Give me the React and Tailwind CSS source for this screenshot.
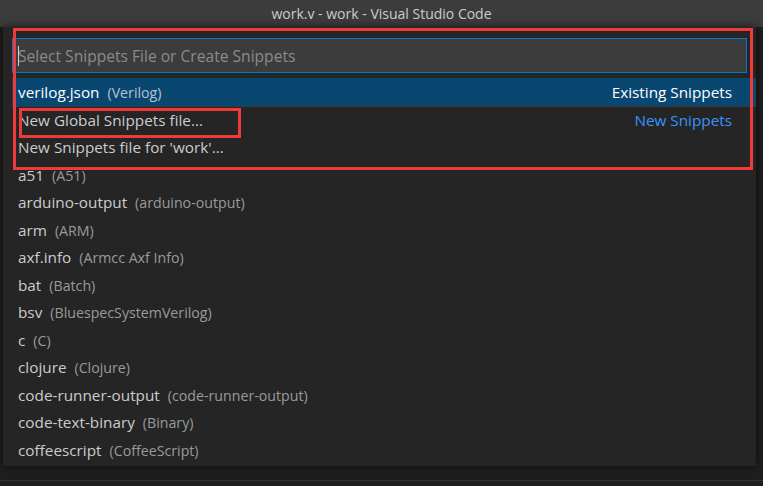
export default function App() {
  const rows = [
    { label: "a51", desc: "(A51)" },
    { label: "arduino-output", desc: "(arduino-output)" },
    { label: "arm", desc: "(ARM)" },
    { label: "axf.info", desc: "(Armcc Axf Info)" },
    { label: "bat", desc: "(Batch)" },
    { label: "bsv", desc: "(BluespecSystemVerilog)" },
    { label: "c", desc: "(C)" },
    { label: "clojure", desc: "(Clojure)" },
    { label: "code-runner-output", desc: "(code-runner-output)" },
    { label: "code-text-binary", desc: "(Binary)" },
    { label: "coffeescript", desc: "(CoffeeScript)" },
  ];

  return (
    <div className="relative w-[763px] h-[486px] overflow-hidden bg-[#1e1e1e] font-['Open_Sans',sans-serif] text-[15.3px] text-[#cccccc]">
      {/* Title bar */}
      <div className="h-[27px] bg-[#3c3c3c] flex items-center justify-center text-[14px] text-[#cccccc]">
        work.v - work - Visual Studio Code
      </div>

      {/* Quick pick panel */}
      <div className="flex">
        <div className="ml-[3px] w-[753px] h-[439px] bg-[#252526] flex flex-col pt-[11px] shadow-[0_0_8px_rgba(0,0,0,0.6)]">
          <div className="mx-[9px] h-[35px] border border-[#007acc] bg-[#3c3c3c] flex items-center pl-[5px] pt-[2px] relative">
            <span className="absolute left-[5px] top-[7px] h-[20px] w-px bg-[#d4d4d4]" />
            <span className="text-[15.6px] text-[#8b8b8b]">Select Snippets File or Create Snippets</span>
          </div>

          <div className="mt-[5px] ml-[9px] flex flex-col">
            <div className="h-[27.5px] bg-[#094771] flex items-center pl-[6px] pr-[24px] pt-[2px]">
              <span className="text-white">verilog.json</span>
              <span className="ml-[8px] text-[14.2px] text-[#b4c3d0]">(Verilog)</span>
              <span className="ml-auto text-white">Existing Snippets</span>
            </div>
            <div className="h-[27.5px] border-t border-[#3a3a3a] flex items-center pl-[6px] pr-[24px] pt-[1px]">
              <span>New Global Snippets file...</span>
              <span className="ml-auto text-[#3794ff]">New Snippets</span>
            </div>
            <div className="h-[27.5px] flex items-center pl-[6px] pt-[2px]">
              <span>New Snippets file for 'work'...</span>
            </div>
            {rows.map((r) => (
              <div key={r.label} className="h-[27.5px] flex items-center pl-[6px] pt-[2px]">
                <span>{r.label}</span>
                <span className="ml-[8px] text-[14.2px] text-[#9a9a9a]">{r.desc}</span>
              </div>
            ))}
          </div>
        </div>
      </div>

      {/* Status strip */}
      <div className="mt-[14px] h-px bg-[#333333]" />

      {/* Annotation boxes */}
      <div className="absolute left-[13px] top-[28px] w-[740px] h-[142px] border-[3px] border-[#ee3a3a]" />
      <div className="absolute left-[19px] top-[108px] w-[222px] h-[30px] border-[3px] border-[#ee3a3a]" />
    </div>
  );
}
